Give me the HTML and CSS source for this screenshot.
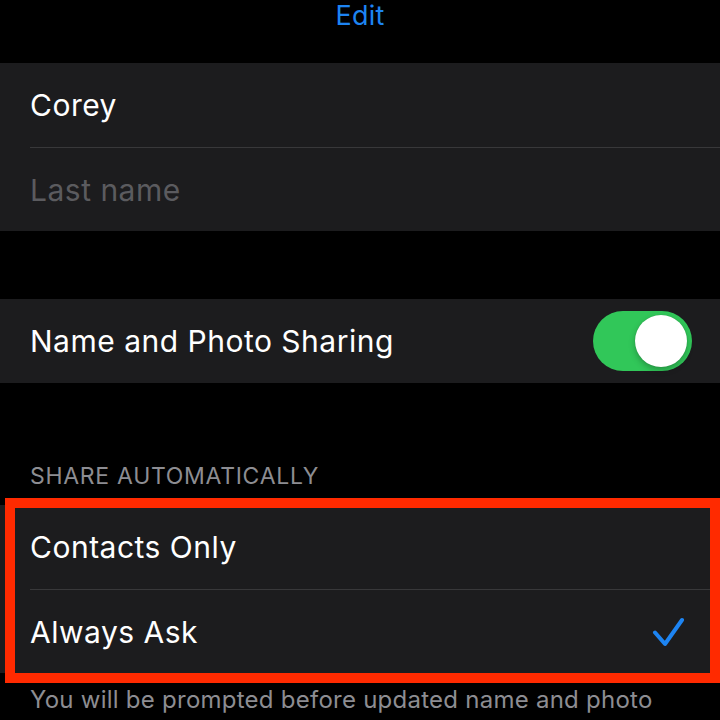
FILE: index.html
```html
<!DOCTYPE html>
<html lang="en">
<head>
<meta charset="utf-8">
<title>Name and Photo Sharing</title>
<link rel="stylesheet" href="styles.css">
</head>
<body>
<div class="screen">
  <div class="nav"><span class="nav-edit">Edit</span></div>

  <div class="group">
    <div class="cell"><span class="cell-text">Corey</span></div>
    <div class="cell cell-sep"><span class="cell-text placeholder">Last name</span></div>
  </div>

  <div class="group group-sharing">
    <div class="cell">
      <span class="cell-text">Name and Photo Sharing</span>
      <span class="toggle"><span class="knob"></span></span>
    </div>
  </div>

  <div class="section-header">SHARE AUTOMATICALLY</div>

  <div class="group group-options">
    <div class="cell"><span class="cell-text">Contacts Only</span></div>
    <div class="cell cell-sep">
      <span class="cell-text">Always Ask</span>
      <svg class="check" viewBox="0 0 32 32" width="32" height="32" aria-hidden="true">
        <path d="M3 16.5 L13 28 L30 4" fill="none" stroke="#1d84f2" stroke-width="4" stroke-linecap="round" stroke-linejoin="round"/>
      </svg>
    </div>
  </div>

  <div class="section-footer">You will be prompted before updated name and photo</div>

  <div class="highlight"></div>
</div>
</body>
</html>
```

FILE: styles.css
```css
html, body {
  margin: 0;
  padding: 0;
  background: #000;
}

body {
  font-family: Inter, "Noto Sans", "Liberation Sans", sans-serif;
  color: #fff;
  width: 720px;
  height: 720px;
  overflow: hidden;
}

.screen {
  position: relative;
  width: 720px;
  height: 720px;
  overflow: hidden;
}

.nav {
  height: 63px;
  display: flex;
  justify-content: center;
}

.nav-edit {
  font-size: 27px;
  line-height: 32px;
  color: #1d84f2;
  letter-spacing: 0.2px;
}

.group {
  background: #1c1c1e;
  display: flex;
  flex-direction: column;
}

.group-sharing {
  margin-top: 68px;
}

.group-options {
  margin-top: 15px;
}

.cell {
  height: 84px;
  box-sizing: border-box;
  margin-left: 30px;
  display: flex;
  align-items: center;
  justify-content: space-between;
}

.cell-sep {
  border-top: 1px solid #38383a;
}

.cell-text {
  font-size: 30px;
  line-height: 36px;
  letter-spacing: 0.5px;
}

.placeholder {
  color: #5b5b5f;
}

.toggle {
  width: 99px;
  height: 60px;
  border-radius: 30px;
  background: #31c759;
  margin-right: 28px;
  display: flex;
  align-items: center;
  justify-content: flex-end;
  box-sizing: border-box;
  padding-right: 5px;
}

.knob {
  width: 52px;
  height: 52px;
  border-radius: 50%;
  background: #fff;
  box-shadow: 0 3px 6px rgba(0, 0, 0, 0.25), 0 0 1px rgba(0, 0, 0, 0.2);
}

.check {
  margin-right: 36px;
  display: block;
}

.section-header {
  margin-top: 79px;
  padding-left: 30px;
  font-size: 23px;
  line-height: 28px;
  color: #8d8d92;
  letter-spacing: 0.7px;
}

.section-footer {
  padding: 11px 30px 0 30px;
  font-size: 24px;
  line-height: 32px;
  color: #8d8d92;
  letter-spacing: 0.25px;
  white-space: nowrap;
}

.highlight {
  position: absolute;
  left: 5px;
  top: 498px;
  width: 715px;
  height: 185px;
  box-sizing: border-box;
  border: 10px solid #ff2a00;
}
```
